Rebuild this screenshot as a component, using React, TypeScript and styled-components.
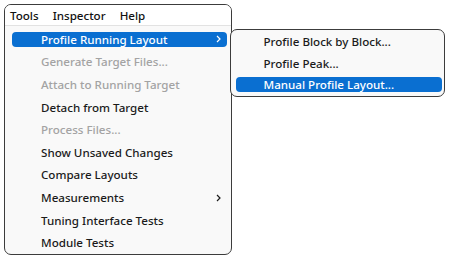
import styled, { createGlobalStyle } from "styled-components";

const Global = createGlobalStyle`
  html, body {
    margin: 0;
    padding: 0;
    background: #ffffff;
  }
  body {
    font-family: "Noto Sans", "Open Sans", sans-serif;
    color: #1b1b1b;
  }
`;

const Page = styled.div`
  position: relative;
  width: 452px;
  height: 260px;
  padding: 4px 0 0 4px;
  box-sizing: border-box;
`;

const Panel = styled.div`
  width: 228px;
  height: 251px;
  box-sizing: border-box;
  border: 1.5px solid #3c3c3c;
  border-radius: 7px;
  background: #f9f9f9;
  overflow: hidden;
  display: flex;
  flex-direction: column;
`;

const MenuBar = styled.div`
  height: 21px;
  display: flex;
  align-items: center;
  gap: 14px;
  padding-left: 5px;
  background: #ffffff;
  border-bottom: 1px solid #e2e2e2;
  font-size: 11.6px;
  font-weight: 500;
`;

const BarItem = styled.span`
  color: #111;
`;

const List = styled.div`
  display: flex;
  flex-direction: column;
  padding: 2px 4px 0 7px;
`;

const Row = styled.div<{ $active?: boolean; $disabled?: boolean; $h: number; $pad: number }>`
  height: ${(p) => p.$h}px;
  display: flex;
  align-items: center;
  font-size: 11.6px;
  font-weight: 500;
  color: ${(p) => (p.$active ? "#ffffff" : p.$disabled ? "#a3a3a3" : "#1b1b1b")};
  > div {
    flex: 1;
    height: 15px;
    display: flex;
    align-items: center;
    padding-left: ${(p) => p.$pad}px;
    padding-right: 6px;
    border-radius: 4px;
    background: ${(p) => (p.$active ? "#0a6fd1" : "transparent")};
  }
`;

const Label = styled.span`
  flex: 1;
  white-space: nowrap;
`;

const SubMenu = styled.div`
  position: absolute;
  left: 230px;
  top: 29px;
  width: 215px;
  height: 68px;
  box-sizing: border-box;
  border: 1.5px solid #3c3c3c;
  border-radius: 7px;
  background: #f9f9f9;
  display: flex;
  flex-direction: column;
  padding: 1px 2px 0 4.5px;
`;

function Chevron() {
  return (
    <svg width="5" height="8" viewBox="0 0 5 8">
      <polyline points="1,1 4,4 1,7" fill="none" stroke="currentColor" strokeWidth="1.2" />
    </svg>
  );
}

type Item = { label: string; active?: boolean; disabled?: boolean; sub?: boolean };

const mainItems: Item[] = [
  { label: "Profile Running Layout", active: true, sub: true },
  { label: "Generate Target Files...", disabled: true },
  { label: "Attach to Running Target", disabled: true },
  { label: "Detach from Target" },
  { label: "Process Files...", disabled: true },
  { label: "Show Unsaved Changes" },
  { label: "Compare Layouts" },
  { label: "Measurements", sub: true },
  { label: "Tuning Interface Tests" },
  { label: "Module Tests" },
];

const subItems: Item[] = [
  { label: "Profile Block by Block..." },
  { label: "Profile Peak..." },
  { label: "Manual Profile Layout...", active: true },
];

export default function App() {
  return (
    <>
      <Global />
      <Page>
        <Panel>
          <MenuBar>
            <BarItem>Tools</BarItem>
            <BarItem>Inspector</BarItem>
            <BarItem>Help</BarItem>
          </MenuBar>
          <List>
            {mainItems.map((it) => (
              <Row key={it.label} $h={22.6} $pad={29} $active={it.active} $disabled={it.disabled}>
                <div>
                  <Label>{it.label}</Label>
                  {it.sub && <Chevron />}
                </div>
              </Row>
            ))}
          </List>
        </Panel>
        <SubMenu>
          {subItems.map((it) => (
            <Row key={it.label} $h={21.6} $pad={28} $active={it.active}>
              <div>
                <Label>{it.label}</Label>
              </div>
            </Row>
          ))}
        </SubMenu>
      </Page>
    </>
  );
}
